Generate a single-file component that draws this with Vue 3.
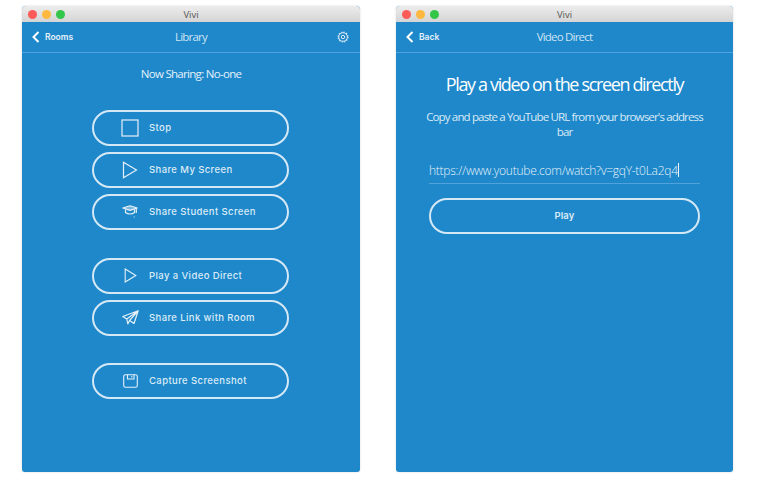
<script setup>
const groups = [
  [
    { label: 'Stop', icon: 'stop' },
    { label: 'Share My Screen', icon: 'play' },
    { label: 'Share Student Screen', icon: 'cap' }
  ],
  [
    { label: 'Play a Video Direct', icon: 'play-small' },
    { label: 'Share Link with Room', icon: 'plane' }
  ],
  [{ label: 'Capture Screenshot', icon: 'save' }]
]
</script>

<template>
  <div class="page">
    <section class="window left">
      <div class="titlebar">
        <div class="lights"><i class="red"></i><i class="yellow"></i><i class="green"></i></div>
        <span>Vivi</span>
      </div>
      <header class="nav">
        <div class="back">
          <svg width="8" height="12" viewBox="0 0 8 12"><path d="M6.5 1 1.5 6l5 5" fill="none" stroke="#fff" stroke-width="2"/></svg>
          <span>Rooms</span>
        </div>
        <div class="nav-title">Library</div>
        <svg class="gear" width="12" height="12" viewBox="0 0 12 12" fill="none" stroke="#dcebf6">
          <circle cx="6" cy="6" r="4.300" stroke-width="1"/>
          <circle cx="6" cy="6" r="5" stroke-width="1.100" stroke-dasharray="1.300 1.320"/>
          <circle cx="6" cy="6" r="1.700" stroke-width="1"/>
        </svg>
      </header>
      <p class="sharing">Now Sharing: No-one</p>
      <div class="groups">
        <div v-for="(g, i) in groups" :key="i" class="group">
          <button v-for="b in g" :key="b.label" class="pill">
            <span class="icon">
              <svg v-if="b.icon === 'stop'" width="18" height="18" viewBox="0 0 18 18"><rect x="1" y="1" width="16" height="16" fill="none" stroke="#e6f1f9" stroke-width="1.200"/></svg>
              <svg v-else-if="b.icon === 'play'" width="16" height="18" viewBox="0 0 16 18"><path d="M1.500 1.200 14.500 9 1.500 16.800Z" fill="none" stroke="#e6f1f9" stroke-width="1.200"/></svg>
              <svg v-else-if="b.icon === 'play-small'" width="13" height="15" viewBox="0 0 13 15"><path d="M1.200 1 11.800 7.500 1.200 14Z" fill="none" stroke="#e6f1f9" stroke-width="1.100"/></svg>
              <svg v-else-if="b.icon === 'cap'" width="16" height="13" viewBox="0 0 16 13" fill="none" stroke="#e6f1f9" stroke-width="1.200">
                <path d="M.8 3 8 .8 15.200 3 8 5.400Z" fill="#e6f1f9" fill-opacity=".45" stroke-linejoin="round"/>
                <path d="M3.500 4.500v3c2.500 2 6.500 2 9 0v-3"/>
                <path d="M14.300 3.500V8M11.700 12h.9"/>
              </svg>
              <svg v-else-if="b.icon === 'plane'" width="17" height="15" viewBox="0 0 17 15" fill="none" stroke="#e6f1f9" stroke-width="1.200" stroke-linejoin="round">
                <path d="M16.200.8.800 6.500l4 2.500L16.200.8Zm0 0L7.500 10.500l4.500 3L16.200.8ZM4.800 9l1 5 1.700-3.500"/>
              </svg>
              <svg v-else width="15" height="14" viewBox="0 0 15 14" fill="none" stroke="#e6f1f9" stroke-width="1.100" stroke-linejoin="round">
                <path d="M2.500.7h10a1.800 1.800 0 0 1 1.800 1.800v9a1.800 1.800 0 0 1-1.800 1.800h-10a1.800 1.800 0 0 1-1.800-1.800v-9A1.800 1.800 0 0 1 2.500.7Z"/>
                <path d="M4.500.7v4.300h6.500V.7M8.800 2v1.600"/>
              </svg>
            </span>
            <span class="label">{{ b.label }}</span>
          </button>
        </div>
      </div>
    </section>

    <section class="window right">
      <div class="titlebar">
        <div class="lights"><i class="red"></i><i class="yellow"></i><i class="green"></i></div>
        <span>Vivi</span>
      </div>
      <header class="nav">
        <div class="back">
          <svg width="8" height="12" viewBox="0 0 8 12"><path d="M6.5 1 1.500 6l5 5" fill="none" stroke="#fff" stroke-width="2"/></svg>
          <span>Back</span>
        </div>
        <div class="nav-title">Video Direct</div>
      </header>
      <div class="direct">
        <h1>Play a video on the screen directly</h1>
        <p class="hint">Copy and paste a YouTube URL from your browser's address bar</p>
        <div class="url"><span>https://www.youtube.com/watch?v=gqY-t0La2q4</span><b></b></div>
        <button class="pill play">Play</button>
      </div>
    </section>
  </div>
</template>

<style scoped>
.page {
  width: 768px;
  height: 480px;
  box-sizing: border-box;
  padding: 6px 35px 8px 22px;
  display: flex;
  gap: 36px;
  background: #fff;
  font-family: "Open Sans", sans-serif;
  color: #fff;
  overflow: hidden;
}
.window {
  background: #1e88cb;
  border-radius: 4px 4px 3px 3px;
  display: flex;
  flex-direction: column;
  overflow: hidden;
  box-shadow: 0 0 2px rgba(0, 0, 0, .18);
}
.left { width: 338px; }
.right { width: 337px; }
.titlebar {
  height: 16px;
  flex: none;
  position: relative;
  background: linear-gradient(#ececec, #d4d4d4);
  display: flex;
  align-items: center;
  justify-content: center;
  font-size: 9.500px;
  color: #555;
}
.lights {
  position: absolute;
  left: 5.500px;
  top: 3.500px;
  display: flex;
  gap: 5px;
}
.lights i { width: 9px; height: 9px; border-radius: 50%; }
.red { background: #fc5b57; }
.yellow { background: #fdb83f; }
.green { background: #34c648; }
.nav {
  height: 30px;
  flex: none;
  border-bottom: 1px solid #4fa3da;
  display: flex;
  align-items: center;
  justify-content: space-between;
  position: relative;
  padding: 0 11px 0 10px;
}
.back {
  display: flex;
  align-items: center;
  gap: 5px;
  font-family: Inter, sans-serif;
  font-size: 8.500px;
  font-weight: 600;
  color: #e6f1f9;
}
.nav-title {
  position: absolute;
  left: 0;
  right: 0;
  top: 7px;
  text-align: center;
  font-size: 11.500px;
  letter-spacing: -.8px;
  font-weight: 400;
  color: #cfe4f3;
}
.sharing {
  margin: 13px 0 0;
  text-align: center;
  font-size: 11.500px;
  font-weight: 400;
  letter-spacing: -.7px;
  color: #e6f1f9;
  line-height: 16px;
}
.groups {
  margin-top: 28px;
  padding-right: 1px;
  display: flex;
  flex-direction: column;
  gap: 27.500px;
  align-items: center;
}
.group {
  display: flex;
  flex-direction: column;
  gap: 6px;
}
.pill {
  box-sizing: border-box;
  width: 197px;
  height: 36px;
  border: 2px solid #d5e8f5;
  border-radius: 18px;
  background: transparent;
  color: #dcebf6;
  display: flex;
  align-items: center;
  padding: 0 0 1px;
  font-family: Inter, sans-serif;
  font-size: 9.500px;
  font-weight: 500;
  letter-spacing: .4px;
}
.icon {
  width: 18px;
  margin-left: 27px;
  display: flex;
  justify-content: center;
  flex: none;
}
.label { margin-left: 10px; }
.direct {
  padding: 0 25px;
  display: flex;
  flex-direction: column;
  align-items: stretch;
  text-align: center;
}
h1 {
  margin: 19px 0 0;
  font-size: 18px;
  line-height: 24px;
  font-weight: 400;
  letter-spacing: -1.350px;
  color: #fff;
}
.hint {
  margin: 12.500px 0 0;
  font-size: 11.500px;
  line-height: 15px;
  font-weight: 400;
  letter-spacing: -.85px;
  color: #dbeaf6;
}
.url {
  margin: 18.500px 8px 0;
  height: 26px;
  display: flex;
  align-items: center;
  border-bottom: 1px solid #4fa3da;
  font-size: 12px;
  font-weight: 300;
  letter-spacing: -.25px;
  color: #e6f1f9;
}
.url b {
  width: 1px;
  height: 14px;
  background: #eef6fb;
}
.play {
  align-self: center;
  width: 271px;
  height: 36px;
  margin-top: 14px;
  justify-content: center;
  font-weight: 600;
  font-size: 9.500px;
  letter-spacing: .1px;
}
</style>
